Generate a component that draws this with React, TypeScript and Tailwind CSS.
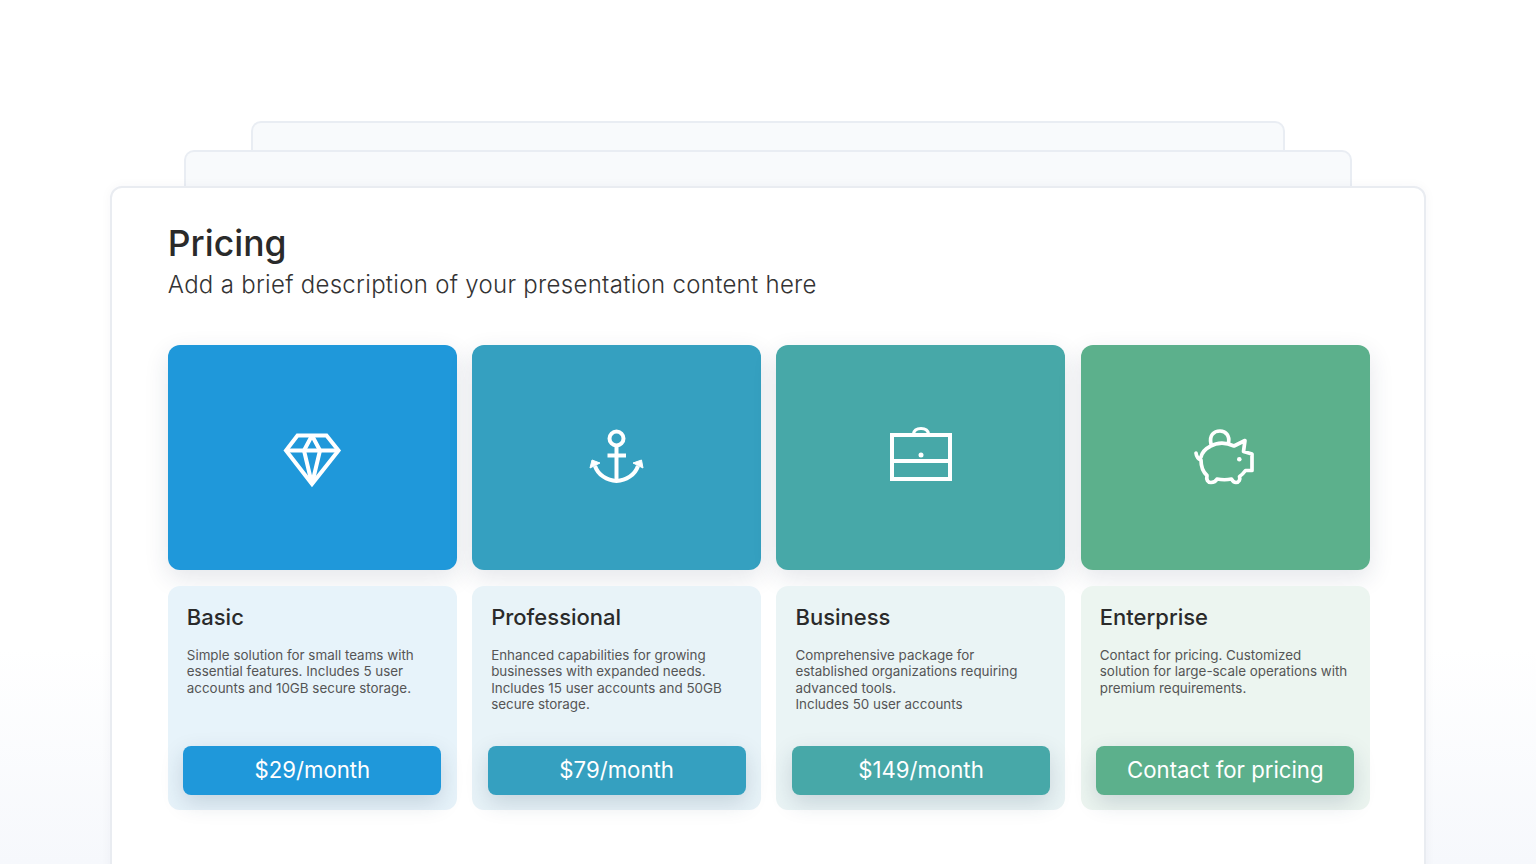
const DiamondIcon = () => (
  <svg width="65" height="65" viewBox="0 0 65 65" fill="none" stroke="white" strokeWidth="4" strokeLinejoin="bevel">
    <path d="M17.5 10.5H46.5L58.5 25.5L32 59L6 25.5Z" strokeLinejoin="miter" />
    <path d="M6 25.5H58.5" />
    <path d="M32 10.5L24 25.5L32 59L40 25.5Z" />
  </svg>
);

const AnchorIcon = () => (
  <svg width="65" height="65" viewBox="0 0 65 65" fill="none" stroke="white" strokeWidth="4">
    <circle cx="32.5" cy="13.5" r="7" />
    <path d="M32.5 20V57" />
    <path d="M23.5 30.5H42" />
    <path d="M11 41C14 50 23 55.5 32.5 56C42 55.5 51 50 54 41" />
    <path d="M6 43L8 35L16 38Z" fill="white" strokeWidth="1" />
    <path d="M59 43L57.5 35L49 38Z" fill="white" strokeWidth="1" />
  </svg>
);

const BriefcaseIcon = () => (
  <svg width="72" height="65" viewBox="0 0 72 65" fill="none" stroke="white" strokeWidth="4">
    <rect x="7" y="10" width="58" height="44" />
    <path d="M7 36H65" />
    <path d="M28.5 9C29 5 32 3.5 36 3.5C40 3.5 43 5 43.5 9" strokeWidth="3.2" />
    <circle cx="36" cy="30" r="2.5" fill="white" stroke="none" />
  </svg>
);

const PiggyIcon = () => (
  <svg width="70" height="65" viewBox="0 0 70 65" fill="none" stroke="white" strokeWidth="3.7" strokeLinejoin="round" strokeLinecap="round">
    <path d="M21 19C19 10 24 6 30 6C36 6 40 11 38.5 18" />
    <path d="M6 28C6.5 32 8.5 34 11 35C11 42 13 47 17 50.5C16 55 18 57.5 21 57.5C24 57.5 26 56 27 54C32 55 37 55 41.5 54C42.5 56 44 57.5 46 57.5C49 57.5 50.5 54.5 49.5 51.5C52 50 54 47.5 55.5 45.5H62V29L53.5 26.5L55 15.5L44 21C35 17 26 18 20 21.5C15 24 12 28 11 32" />
    <circle cx="49.3" cy="34.3" r="2.3" fill="white" stroke="none" />
  </svg>
);

const plans = [
  {
    name: "Basic",
    text: "Simple solution for small teams with essential features. Includes 5 user accounts and 10GB secure storage.",
    price: "$29/month",
    icon: <DiamondIcon />,
    solid: "bg-[#1f98da]",
    soft: "bg-[#e7f3fa]",
  },
  {
    name: "Professional",
    text: "Enhanced capabilities for growing businesses with expanded needs. Includes 15 user accounts and 50GB secure storage.",
    price: "$79/month",
    icon: <AnchorIcon />,
    solid: "bg-[#35a0c0]",
    soft: "bg-[#e8f3f8]",
  },
  {
    name: "Business",
    text: "Comprehensive package for established organizations requiring advanced tools.\nIncludes 50 user accounts",
    price: "$149/month",
    icon: <BriefcaseIcon />,
    solid: "bg-[#47a8a8]",
    soft: "bg-[#eaf4f5]",
  },
  {
    name: "Enterprise",
    text: "Contact for pricing. Customized solution for large-scale operations with premium requirements.",
    price: "Contact for pricing",
    icon: <PiggyIcon />,
    solid: "bg-[#5cb08c]",
    soft: "bg-[#ecf5f0]",
  },
];

export default function App() {
  return (
    <div className="h-screen overflow-hidden bg-gradient-to-b from-white from-75% to-[#f6f8fc] pt-[121px] font-['Inter',sans-serif] text-[#2a2a2a]">
      <div className="mx-[251px] h-[29px] rounded-t-[10px] border-2 border-b-0 border-[#e9edf3] bg-[#f8fafc]" />
      <div className="mx-[184px] h-[36px] rounded-t-[10px] border-2 border-b-0 border-[#e9edf3] bg-[#f8fafc]" />
      <div className="mx-[110px] h-[720px] rounded-[12px] border-2 border-[#e9ecf1] bg-white pl-[55.8px] pr-[54.2px] pt-[34px] shadow-[0_0_12px_rgba(30,50,80,0.04)]">
        <h1 className="text-[35.5px] font-medium leading-[44px]">Pricing</h1>
        <p className="mt-[3px] text-[24px] font-light leading-[32px] tracking-[0.29px] text-[#333333]">
          Add a brief description of your presentation content here
        </p>
        <div className="mt-[44px] grid grid-cols-4 gap-x-[15.33px] gap-y-[16px]">
          {plans.map((p) => (
            <div
              key={p.name}
              className={`flex h-[225px] items-center justify-center rounded-[12px] shadow-[0_8px_24px_rgba(30,50,80,0.12)] ${p.solid}`}
            >
              {p.icon}
            </div>
          ))}
          {plans.map((p) => (
            <div
              key={p.name}
              className={`flex h-[224px] flex-col rounded-[12px] px-[15.5px] pb-[15px] pt-[16px] ${p.soft}`}
            >
              <h2 className="pl-[3.5px] text-[22px] font-medium leading-[30px]">{p.name}</h2>
              <p className="mt-[15px] whitespace-pre-line pl-[3.5px] text-[13.4px] leading-[16.4px] text-[#555555]">
                {p.text}
              </p>
              <div
                className={`mt-auto flex h-[49px] items-center justify-center rounded-[8px] pb-[1px] text-[22.2px] text-white shadow-[0_8px_22px_rgba(30,60,90,0.17)] ${p.solid}`}
              >
                {p.price}
              </div>
            </div>
          ))}
        </div>
      </div>
    </div>
  );
}
